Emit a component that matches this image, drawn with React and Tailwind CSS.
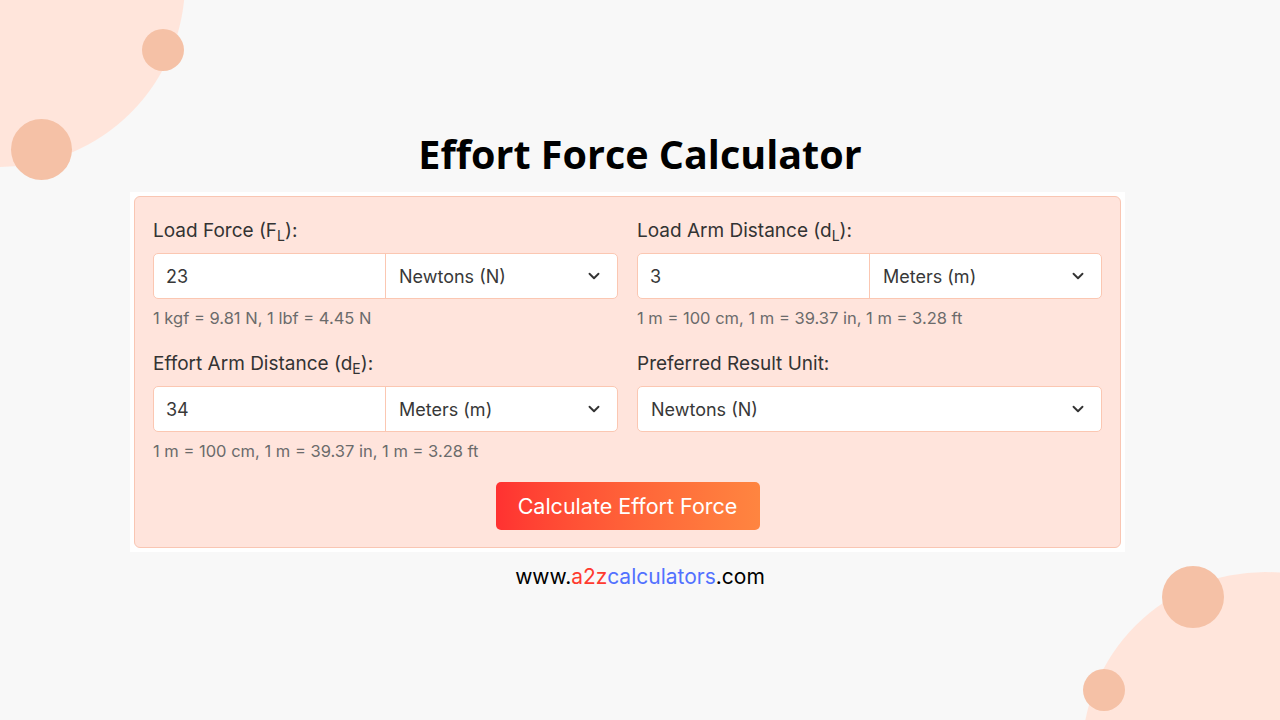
import React from 'react';

function Chevron() {
  return (
    <svg width="18" height="18" viewBox="0 0 24 24" fill="none" stroke="#333" strokeWidth="2.5" strokeLinecap="round" strokeLinejoin="round">
      <path d="M6 9l6 6 6-6" />
    </svg>
  );
}

function Field({ label, sub, value, unit, hint }) {
  return (
    <div className="flex flex-col">
      <div className="text-[19px] text-[#333] h-[25px] leading-[25px] mb-[10px]">
        {label}
        {sub && <sub className="text-[14px]">{sub}</sub>}
        {sub ? '):' : ''}
      </div>
      <div className="flex h-[46px] bg-white border border-[#fbc7b2] rounded-[5px]">
        {value !== undefined && (
          <div className="w-[232px] flex items-center pl-[12px] text-[18px] text-[#383838] border-r border-[#fbc7b2]">{value}</div>
        )}
        <div className="flex-1 flex items-center justify-between pl-[13px] pr-[14px] text-[18px] text-[#383838]">
          <span>{unit}</span>
          <Chevron />
        </div>
      </div>
      <div className="text-[16.5px] text-[#6b6b6b] h-[22px] leading-[22px] mt-[8px]">{hint}</div>
    </div>
  );
}

export default function App() {
  return (
    <div className="relative w-[1280px] h-[720px] overflow-hidden bg-[#f8f8f8]" style={{ fontFamily: 'Inter, "Noto Sans", sans-serif' }}>
      {/* decorative circles */}
      <div className="absolute w-[370px] h-[370px] rounded-full bg-[#ffe5db] left-[-185px] top-[-203px]" />
      <div className="absolute w-[42px] h-[42px] rounded-full bg-[#f5c1a6] left-[142px] top-[29px]" />
      <div className="absolute w-[61px] h-[61px] rounded-full bg-[#f5c1a6] left-[11px] top-[119px]" />
      <div className="absolute w-[366px] h-[366px] rounded-full bg-[#ffe5db] left-[1082px] top-[572px]" />
      <div className="absolute w-[62px] h-[62px] rounded-full bg-[#f5c1a6] left-[1162px] top-[566px]" />
      <div className="absolute w-[42px] h-[42px] rounded-full bg-[#f5c1a6] left-[1083px] top-[669px]" />

      <div className="relative flex flex-col items-center pt-[128px]">
        <h1 className="text-[39.5px] leading-[52px] font-bold text-black" style={{ fontFamily: '"Open Sans", sans-serif' }}>
          Effort Force Calculator
        </h1>
        <div className="mt-[12px] mr-[25px] bg-white p-[4px] w-[995px]">
          <div className="bg-[#ffe4dc] border border-[#f9c6b3] rounded-[6px] px-[18px] pt-[21px] pb-[17px]">
            <div className="grid grid-cols-2 gap-x-[19px] gap-y-[22px]">
              <Field label="Load Force (F" sub="L" value="23" unit="Newtons (N)" hint="1 kgf = 9.81 N, 1 lbf = 4.45 N" />
              <Field label="Load Arm Distance (d" sub="L" value="3" unit="Meters (m)" hint="1 m = 100 cm, 1 m = 39.37 in, 1 m = 3.28 ft" />
              <Field label="Effort Arm Distance (d" sub="E" value="34" unit="Meters (m)" hint="1 m = 100 cm, 1 m = 39.37 in, 1 m = 3.28 ft" />
              <Field label="Preferred Result Unit:" unit="Newtons (N)" hint="" />
            </div>
            <div className="flex justify-center mt-[20px]">
              <button className="w-[264px] h-[48px] rounded-[5px] text-white text-[21.5px] bg-gradient-to-r from-[#ff3131] to-[#ff8540]">
                Calculate Effort Force
              </button>
            </div>
          </div>
        </div>
        <div className="mt-[9px] text-[21px] text-black">
          www.<span className="text-[#ff3b30]">a2z</span><span className="text-[#5271ff]">calculators</span>.com
        </div>
      </div>
    </div>
  );
}
